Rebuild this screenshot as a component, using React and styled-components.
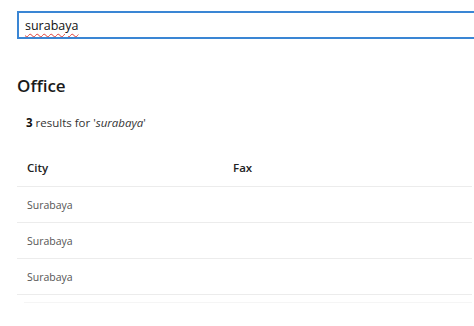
import React from 'react';
import styled, { createGlobalStyle } from 'styled-components';

const GlobalStyle = createGlobalStyle`
  html, body {
    margin: 0;
    padding: 0;
    background: #ffffff;
    overflow: hidden;
  }
  body {
    font-family: "Open Sans", "Noto Sans", sans-serif;
    color: #222;
  }
`;

const Page = styled.div`
  padding: 11px 0 0 17px;
`;

const SearchBox = styled.div`
  width: 480px;
  height: 28px;
  box-sizing: border-box;
  border: 2px solid #3a86d4;
  display: flex;
  align-items: center;
  padding-left: 6px;
`;

const SearchText = styled.span`
  font-size: 12.5px;
  color: #111;
  text-decoration: underline wavy #e0403a;
  text-decoration-thickness: 1px;
  text-underline-offset: 3px;
`;

const Heading = styled.h2`
  margin: 35px 0 0 0;
  font-size: 17px;
  font-weight: 600;
  line-height: 24px;
  color: #1a1a1a;
`;

const Summary = styled.p`
  margin: 17px 0 0 9px;
  font-size: 11.5px;
  line-height: 16px;
  color: #333;

  b { font-weight: 700; color: #111; }
  i { font-style: italic; }
`;

const Table = styled.div`
  width: 455px;
  margin-top: 18px;
`;

const Row = styled.div`
  display: grid;
  grid-template-columns: 206px 1fr;
  align-items: center;
  height: ${p => (p.$head ? '38px' : '36px')};
  border-bottom: 1px solid #ececec;
  box-sizing: border-box;
`;

const Cell = styled.div`
  padding-left: 10px;
  font-size: ${p => (p.$head ? '11.5px' : '10.5px')};
  font-weight: ${p => (p.$head ? 600 : 400)};
  color: ${p => (p.$head ? '#222' : '#555')};
`;

const TailLine = styled.div`
  margin: 7px 0 0 7px;
  height: 1px;
  background: #f5f5f5;
`;

const rows = ['Surabaya', 'Surabaya', 'Surabaya'];

export default function App() {
  return (
    <>
      <GlobalStyle />
      <Page>
        <SearchBox>
          <SearchText>surabaya</SearchText>
        </SearchBox>
        <Heading>Office</Heading>
        <Summary>
          <b>3</b> results for '<i>surabaya</i>'
        </Summary>
        <Table>
          <Row $head>
            <Cell $head>City</Cell>
            <Cell $head>Fax</Cell>
          </Row>
          {rows.map((city, i) => (
            <Row key={i}>
              <Cell>{city}</Cell>
              <Cell></Cell>
            </Row>
          ))}
          <TailLine />
        </Table>
      </Page>
    </>
  );
}
